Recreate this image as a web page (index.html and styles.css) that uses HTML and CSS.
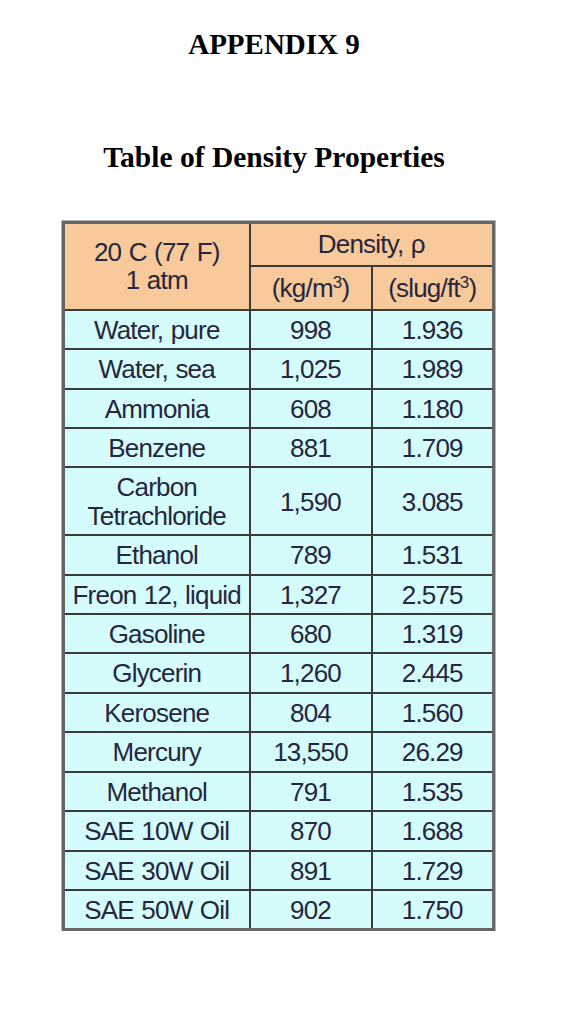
FILE: index.html
```html
<!DOCTYPE html>
<html>
<head>
<meta charset="utf-8">
<link rel="stylesheet" href="styles.css">
</head>
<body>
<div class="page">
  <h1 class="title">APPENDIX 9</h1>
  <h2 class="subtitle">Table of Density Properties</h2>
  <table class="density">
    <colgroup>
      <col class="c-name">
      <col class="c-si">
      <col class="c-us">
    </colgroup>
    <thead>
      <tr class="h1">
        <th rowspan="2" class="cond">20 C (77 F)<br>1 atm</th>
        <th colspan="2">Density, ρ</th>
      </tr>
      <tr class="h2">
        <th>(kg/m<sup>3</sup>)</th>
        <th>(slug/ft<sup>3</sup>)</th>
      </tr>
    </thead>
    <tbody>
      <tr><td>Water, pure</td><td>998</td><td>1.936</td></tr>
      <tr><td>Water, sea</td><td>1,025</td><td>1.989</td></tr>
      <tr><td>Ammonia</td><td>608</td><td>1.180</td></tr>
      <tr><td>Benzene</td><td>881</td><td>1.709</td></tr>
      <tr><td>Carbon<br>Tetrachloride</td><td>1,590</td><td>3.085</td></tr>
      <tr><td>Ethanol</td><td>789</td><td>1.531</td></tr>
      <tr><td>Freon 12, liquid</td><td>1,327</td><td>2.575</td></tr>
      <tr><td>Gasoline</td><td>680</td><td>1.319</td></tr>
      <tr><td>Glycerin</td><td>1,260</td><td>2.445</td></tr>
      <tr><td>Kerosene</td><td>804</td><td>1.560</td></tr>
      <tr><td>Mercury</td><td>13,550</td><td>26.29</td></tr>
      <tr><td>Methanol</td><td>791</td><td>1.535</td></tr>
      <tr><td>SAE 10W Oil</td><td>870</td><td>1.688</td></tr>
      <tr><td>SAE 30W Oil</td><td>891</td><td>1.729</td></tr>
      <tr><td>SAE 50W Oil</td><td>902</td><td>1.750</td></tr>
    </tbody>
  </table>
</div>
</body>
</html>
```

FILE: styles.css
```css
html, body {
  margin: 0;
  padding: 0;
  background: #ffffff;
}

.page {
  width: 548px;
  padding-top: 27px;
}

.title,
.subtitle {
  margin: 0;
  font-family: "Liberation Serif", "Times New Roman", serif;
  font-weight: bold;
  font-size: 29px;
  line-height: 34px;
  color: #000;
  text-align: center;
}

.subtitle {
  font-size: 29.5px;
  margin-top: 79px;
}

.density {
  margin: 47px 0 0 62px;
  width: 430px;
  table-layout: fixed;
  border-collapse: collapse;
  border: 3px solid #666666;
  box-shadow: 0 0 0 1px #b4b4b4;
  font-family: "Liberation Sans", Arial, sans-serif;
  font-size: 26px;
  letter-spacing: -0.8px;
  word-spacing: 1px;
  color: #26263e;
}

.c-name { width: 186px; }
.c-si { width: 122px; }
.c-us { width: 122px; }

.density th,
.density td {
  border: 2px solid #3a3a3a;
  text-align: center;
  font-weight: normal;
  line-height: 28.4px;
  padding: 5px 2px 4px;
}

.density th {
  background: #f8c99b;
}

.density td {
  background: #d4fcfc;
}

.density .h1 th {
  padding: 6px 2px 7px;
}

.density .h2 th {
  padding: 7px 2px 6px;
}

.density .cond {
  vertical-align: middle;
}

.density sup {
  font-size: 17px;
  line-height: 0;
  vertical-align: 9px;
}
```
